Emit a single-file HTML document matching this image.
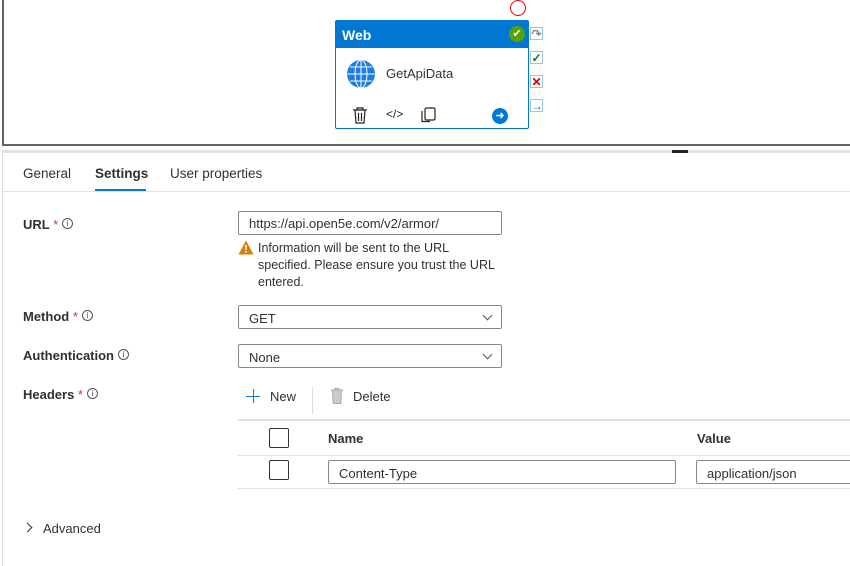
<!DOCTYPE html>
<html><head><style>
*{margin:0;padding:0;box-sizing:border-box}
body{width:850px;height:566px;background:#fff;font-family:"Liberation Sans",sans-serif;color:#323130;position:relative;overflow:hidden;font-size:13px}
.a{position:absolute}
.lbl{position:absolute;left:23px;font-size:13px;font-weight:bold;color:#323130}
.lbl .s{color:#c4314b;font-weight:normal}
.info{display:inline-block;width:11px;height:11px;border:1px solid #555;border-radius:50%;font-size:8px;line-height:9px;text-align:center;font-weight:normal;vertical-align:3px;margin-left:4px;color:#444}
.box{position:absolute;border:1px solid #8a8886;border-radius:2px;background:#fff;font-size:13px;padding-left:10px}
.chev{position:absolute;right:10px;top:6px;width:7px;height:7px;border-right:1px solid #555;border-bottom:1px solid #555;transform:rotate(45deg)}
.cb{position:absolute;width:20px;height:20px;border:1px solid #333;border-radius:2px}
.side{position:absolute;left:530px;width:13px;height:13px;border:1px solid #9cc3e8;font-size:12px;line-height:12px;text-align:center;font-weight:bold}
</style></head><body>
<div class="a" style="left:2px;top:0;width:2px;height:146px;background:#666"></div>
<div class="a" style="left:2px;top:144px;width:848px;height:2px;background:#666"></div>
<div class="a" style="left:2px;top:150px;width:848px;height:3px;background:#e1e1e1"></div>
<div class="a" style="left:672px;top:150px;width:16px;height:3px;background:#222"></div>
<div class="a" style="left:2px;top:153px;width:1px;height:413px;background:#ddd"></div>

<div class="a" style="left:510px;top:0;width:16px;height:16px;border:1px solid #e00;border-radius:50%"></div>
<div class="a" style="left:335px;top:20px;width:194px;height:109px;border:1px solid #0078d4;border-radius:2px;background:#fff">
 <div style="height:27px;background:#0078d4;color:#fff;font-weight:bold;font-size:14px;padding:6px 0 0 6px">Web</div>
 <div class="a" style="left:173px;top:5px;width:16px;height:16px;border-radius:50%;background:#57a300;color:#fff;font-size:11px;text-align:center;line-height:16px">✔</div>
 <svg class="a" style="left:10px;top:38px" width="30" height="30" viewBox="0 0 30 30"><circle cx="15" cy="15" r="14" fill="#1f7de0"/><g fill="none" stroke="#fff" stroke-width="1"><ellipse cx="15" cy="15" rx="6" ry="14"/><line x1="15" y1="1" x2="15" y2="29"/><line x1="1" y1="15" x2="29" y2="15"/><line x1="4" y1="8" x2="26" y2="8"/><line x1="4" y1="22" x2="26" y2="22"/></g></svg>
 <div class="a" style="left:50px;top:45px;font-size:13px;color:#323130">GetApiData</div>
 <svg class="a" style="left:16px;top:86px" width="16" height="17" viewBox="0 0 16 17"><path d="M1 3h14M5 3V1h6v2M3 3l1 13h8l1-13M6.5 6v8M9.5 6v8" fill="none" stroke="#222" stroke-width="1.2"/></svg>
 <div class="a" style="left:50px;top:86px;font-size:12px;color:#222">&lt;/&gt;</div>
 <svg class="a" style="left:85px;top:86px" width="15" height="16" viewBox="0 0 15 16"><rect x="4" y="1" width="10" height="12" rx="1.5" fill="none" stroke="#222" stroke-width="1.2"/><path d="M1 4v10.5h8" fill="none" stroke="#222" stroke-width="1.2"/></svg>
 <div class="a" style="left:156px;top:87px;width:16px;height:16px;border-radius:50%;background:#0078d4;color:#fff;font-size:11px;text-align:center;line-height:16px">➜</div>
</div>
<div class="side" style="top:27px;color:#888">↷</div>
<div class="side" style="top:51px;color:#107c10">✓</div>
<div class="side" style="top:75px;color:#c00">✕</div>
<div class="side" style="top:99px;color:#0078d4">→</div>

<div class="a" style="left:23px;top:166px;font-size:13.5px">General</div>
<div class="a" style="left:95px;top:166px;font-size:13.5px;font-weight:bold">Settings</div>
<div class="a" style="left:95px;top:189px;width:51px;height:2px;background:#0078d4"></div>
<div class="a" style="left:170px;top:166px;font-size:13.5px">User properties</div>
<div class="a" style="left:3px;top:191px;width:847px;height:1px;background:#e1e1e1"></div>

<div class="lbl" style="top:217px">URL <span class="s">*</span><span class="info">i</span></div>
<div class="box" style="left:238px;top:211px;width:264px;height:24px;line-height:23px">https://api.open5e.com/v2/armor/</div>
<svg class="a" style="left:238px;top:240px" width="16" height="15" viewBox="0 0 16 15"><path d="M8 0.5L15.5 14.5H0.5Z" fill="#d67f09"/><rect x="7.2" y="5" width="1.6" height="5" fill="#fff"/><rect x="7.2" y="11" width="1.6" height="1.6" fill="#fff"/></svg>
<div class="a" style="left:258px;top:240px;font-size:12.5px;line-height:17px;width:242px">Information will be sent to the URL specified. Please ensure you trust the URL entered.</div>

<div class="lbl" style="top:309px">Method <span class="s">*</span><span class="info">i</span></div>
<div class="box" style="left:238px;top:305px;width:264px;height:24px;line-height:25px">GET<span class="chev"></span></div>
<div class="lbl" style="top:348px">Authentication<span class="info">i</span></div>
<div class="box" style="left:238px;top:344px;width:264px;height:24px;line-height:25px">None<span class="chev"></span></div>
<div class="lbl" style="top:387px">Headers <span class="s">*</span><span class="info">i</span></div>

<div class="a" style="left:246px;top:389px;width:14px;height:1px;background:#0078d4;top:396px"></div>
<div class="a" style="left:253px;top:389px;width:1px;height:14px;background:#0078d4"></div>
<div class="a" style="left:270px;top:389px">New</div>
<div class="a" style="left:312px;top:387px;width:1px;height:27px;background:#ddd"></div>
<svg class="a" style="left:331px;top:388px" width="12" height="16" viewBox="0 0 12 16"><path d="M0 2h12M4 2V0.5h4V2M1.5 2l0.7 13.5h7.6L10.5 2" fill="#ccc" stroke="#aaa"/></svg>
<div class="a" style="left:353px;top:389px">Delete</div>
<div class="a" style="left:238px;top:419px;width:612px;height:2px;background:#e1e1e1"></div>
<div class="cb" style="left:269px;top:428px"></div>
<div class="a" style="left:328px;top:431px;font-weight:bold">Name</div>
<div class="a" style="left:697px;top:431px;font-weight:bold">Value</div>
<div class="a" style="left:238px;top:455px;width:612px;height:1px;background:#e1e1e1"></div>
<div class="cb" style="left:269px;top:460px"></div>
<div class="box" style="left:328px;top:460px;width:348px;height:24px;line-height:25px">Content-Type</div>
<div class="box" style="left:696px;top:460px;width:160px;height:24px;line-height:25px">application/json</div>
<div class="a" style="left:238px;top:488px;width:612px;height:1px;background:#e1e1e1"></div>

<div class="a" style="left:24px;top:524px;width:7px;height:7px;border-right:1px solid #333;border-bottom:1px solid #333;transform:rotate(-45deg)"></div>
<div class="a" style="left:43px;top:521px">Advanced</div>
</body></html>
